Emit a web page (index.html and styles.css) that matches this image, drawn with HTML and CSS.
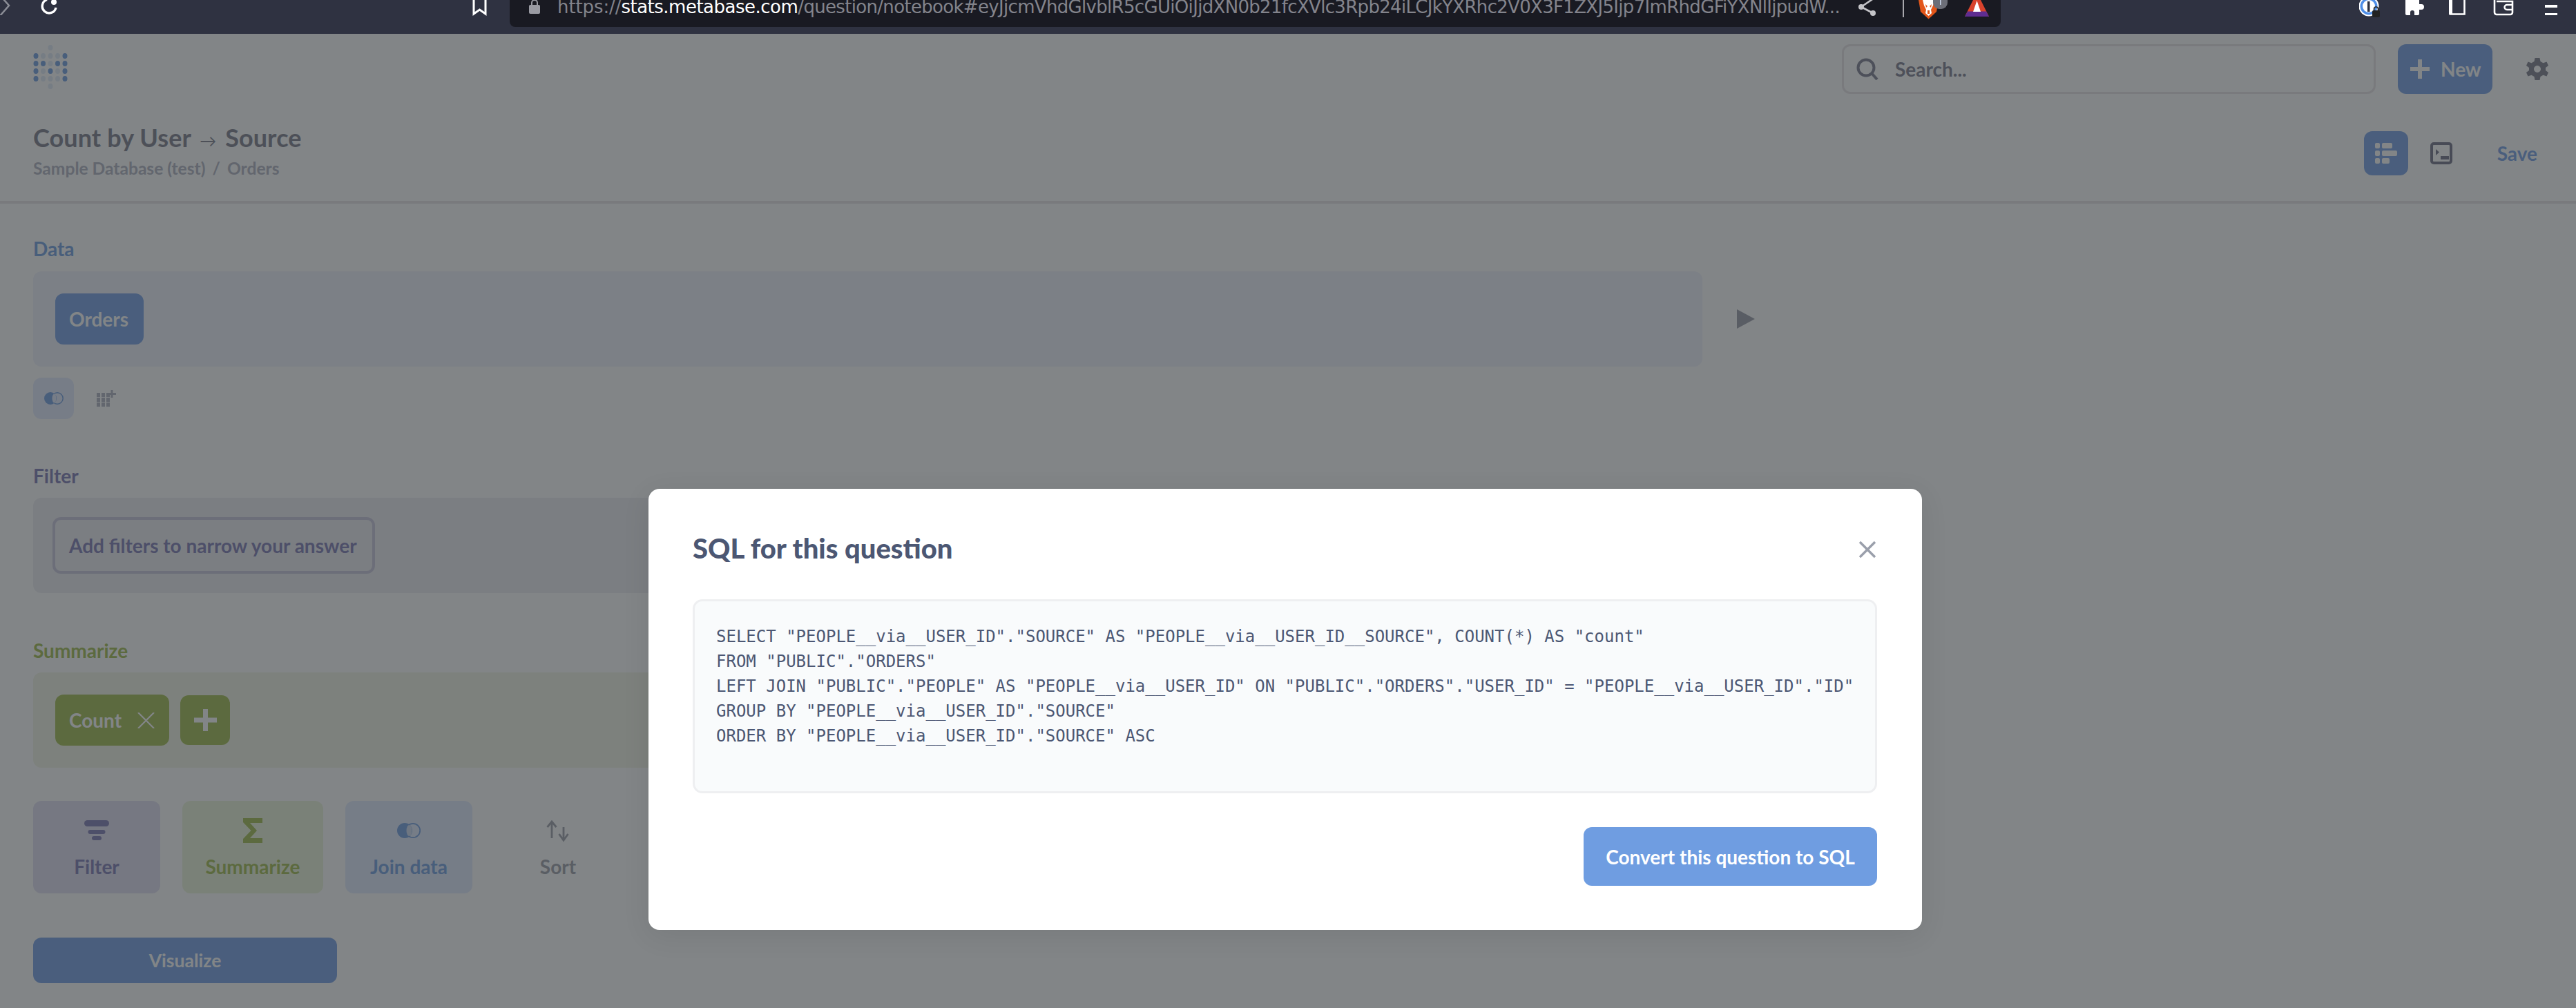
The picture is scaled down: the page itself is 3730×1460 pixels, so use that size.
FILE: index.html
```html
<!DOCTYPE html>
<html lang="en">
<head>
<meta charset="utf-8">
<title>Count by User → Source</title>
<link rel="stylesheet" href="styles.css">
</head>
<body>
<header class="browser">
  <svg class="i-chev" viewBox="0 0 16 22"><path d="M-1 -8 L13 8 L-1 24" fill="none" stroke="#8b8d96" stroke-width="2.5"/></svg>
  <svg class="i-reload" viewBox="0 0 27 24"><path d="M11 0.5 A10 10 0 1 0 24 12" fill="none" stroke="#fff" stroke-width="3.4"/><circle cx="21" cy="4" r="4" fill="#fff"/></svg>
  <svg class="i-bookmark" viewBox="0 0 21 24"><path d="M2 -4 V20 L10.5 14 L19 20 V-4" fill="none" stroke="#fff" stroke-width="3"/></svg>
  <div class="urlbar">
    <svg class="i-lock" viewBox="0 0 16 21"><rect x="0" y="7" width="16" height="13" rx="2" fill="#9a9ba3"/><path d="M4 8 V4 a4 4 0 0 1 8 0 V8" fill="none" stroke="#9a9ba3" stroke-width="2"/></svg>
    <div class="url"><span class="url-scheme">https://</span><b>stats.metabase.com</b><span>/question/notebook#eyJjcmVhdGlvblR5cGUiOiJjdXN0b21fcXVlc3Rpb24iLCJkYXRhc2V0X3F1ZXJ5Ijp7ImRhdGFiYXNlIjpudW...</span></div>
    <svg class="i-share" viewBox="0 0 26 24"><path d="M24 -3 L5 10 L22 19" fill="none" stroke="#c4c4c8" stroke-width="2.6"/><circle cx="5" cy="10" r="4" fill="#c4c4c8"/><circle cx="22" cy="19" r="4" fill="#c4c4c8"/></svg>
    <i class="sep"></i>
    <svg class="i-lion" viewBox="0 0 44 28"><path d="M0 0 H29 L26 17 L14.500 27.500 L3 17 Z" fill="#e2561a"/><path d="M6 0 H23 L21 8 L18 14 L19 19 L14.500 23 L10 19 L11 14 L8 8 Z" fill="#fff"/><path d="M10 6 L13 9 L11 11 Z M19 6 L16 9 L18 11 Z M13 15 H16 V20 H13 Z" fill="#e2561a"/><rect x="21" y="-10" width="21" height="23" rx="9" fill="#6c6e78"/><rect x="31" y="-2" width="1.500" height="9" fill="#c8d4e8"/></svg>
    <svg class="i-tri" viewBox="0 0 35 24"><path d="M12 0 H23 L35 24 H0 Z" fill="#d8432c"/><path d="M4 16.500 H31 L35 24 H0 Z" fill="#5e2d91"/><path d="M17.500 1 L23 17 H12 Z" fill="#fff"/></svg>
  </div>
  <svg class="i-onepass" viewBox="0 0 32 26"><circle cx="14" cy="9" r="14.500" fill="#fff"/><circle cx="14" cy="9" r="12.500" fill="#4f8fe8"/><circle cx="14" cy="9" r="9" fill="#fff"/><rect x="12" y="2" width="3.500" height="15" fill="#2f3241"/><rect x="19" y="15" width="11" height="10" rx="2" fill="#222"/><path d="M21.500 15 v-2 a3 3 0 0 1 6 0 v2" fill="none" stroke="#222" stroke-width="1.600"/></svg>
  <svg class="i-puzzle" viewBox="0 0 30 23"><path d="M3 -2 H23 V6 H26 a4 4 0 0 1 0 8 H23 V20 a2 2 0 0 1 -2 2 H16 V18 a3 3 0 0 0 -6 0 V22 H5 a2 2 0 0 1 -2 -2 Z" fill="#fff"/></svg>
  <svg class="i-side" viewBox="0 0 26 23"><path d="M3 -3 H23.500 V20.500 H3 Z" fill="none" stroke="#fff" stroke-width="2.600"/><rect x="1" y="-2" width="5" height="23" fill="#fff"/></svg>
  <svg class="i-wallet" viewBox="0 0 30 23"><path d="M2 -3 V18 a3 3 0 0 0 3 3 H25 a3 3 0 0 0 3 -3 V2 H5" fill="none" stroke="#fff" stroke-width="2.600"/><path d="M28 7 H20 a3 3 0 0 0 0 7 H28" fill="none" stroke="#fff" stroke-width="2.400"/></svg>
  <div class="burger"><i></i><i></i></div>
</header>

<div class="viewport">
  <nav class="appnav">
    <svg class="logo" viewBox="48 64 50 66">
      <g class="dot-pale"><ellipse cx="73" cy="69" rx="3.500" ry="4"/><ellipse cx="62.500" cy="81" rx="3.500" ry="4"/><ellipse cx="73" cy="81" rx="3.500" ry="4"/><ellipse cx="83.500" cy="81" rx="3.500" ry="4"/><ellipse cx="73" cy="92" rx="3.500" ry="4"/><ellipse cx="62.500" cy="103" rx="3.500" ry="4"/><ellipse cx="83.500" cy="103" rx="3.500" ry="4"/><ellipse cx="62.500" cy="114" rx="3.500" ry="4"/><ellipse cx="73" cy="114" rx="3.500" ry="4"/><ellipse cx="83.500" cy="114" rx="3.500" ry="4"/><ellipse cx="73" cy="125" rx="3.500" ry="4"/></g>
      <g class="dot-dark"><ellipse cx="52" cy="81" rx="3.500" ry="4"/><ellipse cx="94" cy="81" rx="3.500" ry="4"/><ellipse cx="52" cy="92" rx="3.500" ry="4"/><ellipse cx="62.500" cy="92" rx="3.500" ry="4"/><ellipse cx="83.500" cy="92" rx="3.500" ry="4"/><ellipse cx="94" cy="92" rx="3.500" ry="4"/><ellipse cx="52" cy="103" rx="3.500" ry="4"/><ellipse cx="73" cy="103" rx="3.500" ry="4"/><ellipse cx="94" cy="103" rx="3.500" ry="4"/><ellipse cx="52" cy="114" rx="3.500" ry="4"/><ellipse cx="94" cy="114" rx="3.500" ry="4"/></g>
    </svg>
    <div class="search">
      <svg class="i-search" viewBox="0 0 32 32"><circle cx="14" cy="14" r="11.500" fill="none" stroke="currentColor" stroke-width="4"/><path d="M22 22 L30 31" stroke="currentColor" stroke-width="4"/></svg>
      <span>Search...</span>
    </div>
    <button class="btn-new"><svg class="i-plus-sm" viewBox="0 0 28 28"><path d="M14 0 V28 M0 14 H28" stroke="#fff" stroke-width="6"/></svg>New</button>
    <svg class="i-gear" viewBox="0 0 32 32"><path fill-rule="evenodd" d="M12.500 0 H19.500 L20.500 5 L24.500 7.300 L29.500 5.500 L32 11 L28 14 V18 L32 21 L29.500 26.500 L24.500 24.700 L20.500 27 L19.500 32 H12.500 L11.500 27 L7.500 24.700 L2.500 26.500 L0 21 L4 18 V14 L0 11 L2.500 5.500 L7.500 7.300 L11.500 5 Z M16 11 a5 5 0 1 0 0.010 0 Z" fill="currentColor"/></svg>
  </nav>

  <section class="qheader">
    <div class="qtitle">
      <h1>Count by User <small>→</small> Source</h1>
      <p>Sample Database (test)<em>/</em>Orders</p>
    </div>
    <div class="qactions">
      <div class="toggle">
        <svg class="i-list" viewBox="0 0 32 32"><g fill="#fff"><rect x="0" y="1" width="7" height="8" rx="2"/><rect x="10" y="1" width="15" height="8" rx="2"/><rect x="0" y="12" width="7" height="8" rx="2"/><rect x="10" y="12" width="22" height="8" rx="2"/><rect x="0" y="23" width="7" height="8" rx="2"/><rect x="10" y="23" width="11" height="8" rx="2"/></g></svg>
      </div>
      <svg class="i-sql" viewBox="0 0 32 32"><rect x="2" y="2" width="28" height="28" rx="3" fill="none" stroke="currentColor" stroke-width="4"/><path d="M8 10 L13 14.500 L8 19 Z M15 20 H27 V25 H15 Z" fill="currentColor"/></svg>
      <span class="save">Save</span>
    </div>
  </section>

  <main class="notebook">
    <h3 class="label label-data">Data</h3>
    <div class="line">
      <div class="row row-data"><span class="pill pill-data">Orders</span></div>
      <svg class="i-play" viewBox="0 0 26 28"><path d="M0 0 L26 14 L0 28 Z" fill="currentColor"/></svg>
    </div>
    <div class="subactions">
      <div class="subtile"><svg class="i-join-sm" viewBox="0 0 28 18"><ellipse cx="19" cy="9" rx="8.200" ry="8.200" fill="none" stroke="#6f9de1" stroke-width="1.500"/><circle cx="9" cy="9" r="9" fill="#6f9de1"/><ellipse cx="14.500" cy="9" rx="3" ry="6.500" fill="#e4ebff"/></svg></div>
      <svg class="i-gridplus" viewBox="0 0 28 24"><g fill="#b0b2c0"><rect x="0" y="4" width="5" height="6"/><rect x="7" y="4" width="5" height="6"/><rect x="14" y="4" width="5" height="6"/><rect x="0" y="11" width="5" height="6"/><rect x="7" y="11" width="5" height="6"/><rect x="14" y="11" width="5" height="6"/><rect x="0" y="18" width="5" height="6"/><rect x="7" y="18" width="5" height="6"/><rect x="14" y="18" width="5" height="6"/></g><path d="M22 0 V11 M16 5.500 H28" stroke="#b0b2c0" stroke-width="3"/></svg>
    </div>

    <h3 class="label label-filter">Filter</h3>
    <div class="row row-filter"><span class="addfilter">Add filters to narrow your answer</span></div>

    <h3 class="label label-summ">Summarize</h3>
    <div class="row row-summ">
      <span class="pill pill-count">Count<svg class="i-x-sm" viewBox="0 0 25 23"><path d="M1 0 L24 23 M24 0 L1 23" stroke="#fff" stroke-width="2.200"/></svg></span>
      <span class="pill-plus"><svg class="i-plus-md" viewBox="0 0 33 32"><path d="M16.500 0 V32 M0 16 H33" stroke="#fff" stroke-width="7"/></svg></span>
    </div>

    <div class="tiles">
      <div class="tile tile-filter">
        <svg class="tile-icon" viewBox="0 0 36 36"><rect x="0" y="3" width="36" height="9" rx="4.500" fill="#7c78b3"/><rect x="5.500" y="17" width="25" height="6" rx="3" fill="#7c78b3"/><rect x="11" y="26" width="14" height="6" rx="3" fill="#7c78b3"/></svg>
        <span>Filter</span>
      </div>
      <div class="tile tile-summ">
        <svg class="tile-icon" viewBox="0 0 36 36"><path d="M4 0 H32 V7 H14 L24 18 L14 29 H32 V36 H4 V30 L15.500 18 L4 6 Z" fill="#a1bc4c"/></svg>
        <span>Summarize</span>
      </div>
      <div class="tile tile-join">
        <svg class="tile-icon" viewBox="0 0 36 36"><circle cx="24" cy="18" r="10.200" fill="none" stroke="#6f9de1" stroke-width="1.800"/><circle cx="12" cy="18" r="11" fill="#6f9de1"/><ellipse cx="18.500" cy="18" rx="4" ry="8" fill="#cfdcf2"/></svg>
        <span>Join data</span>
      </div>
      <div class="tile tile-sort">
        <svg class="tile-icon" viewBox="0 0 36 36"><path d="M9 29 V6 M2.500 13 L9 5 L15.500 13 M26 13 V31 M19.500 23 L26 32 L32.500 23" fill="none" stroke="currentColor" stroke-width="2.800"/></svg>
        <span>Sort</span>
      </div>
    </div>

    <button class="visualize">Visualize</button>
  </main>

  <div class="scrim">
    <div class="modal">
      <div class="modal-head">
        <h2>SQL for this question</h2>
        <svg class="i-close" viewBox="0 0 26 26"><path d="M2 2 L24 24 M24 2 L2 24" stroke="#9a9fab" stroke-width="3.400"/></svg>
      </div>
      <pre class="sql">SELECT "PEOPLE__via__USER_ID"."SOURCE" AS "PEOPLE__via__USER_ID__SOURCE", COUNT(*) AS "count"
FROM "PUBLIC"."ORDERS"
LEFT JOIN "PUBLIC"."PEOPLE" AS "PEOPLE__via__USER_ID" ON "PUBLIC"."ORDERS"."USER_ID" = "PEOPLE__via__USER_ID"."ID"
GROUP BY "PEOPLE__via__USER_ID"."SOURCE"
ORDER BY "PEOPLE__via__USER_ID"."SOURCE" ASC</pre>
      <div class="modal-foot"><button class="convert">Convert this question to SQL</button></div>
    </div>
  </div>
</div>
</body>
</html>
```

FILE: styles.css
```css
* { box-sizing: border-box; }
html, body { margin: 0; padding: 0; height: 100%; overflow: hidden; }
body { width: 3730px; height: 1460px; background: #fff; font-family: Lato, "Open Sans", sans-serif; color: #4c5773; display: flex; flex-direction: column; }
svg { display: block; flex: none; }
h1, h2, h3, p { margin: 0; }
button { font-family: inherit; border: 0; padding: 0; }

/* browser chrome */
.browser { height: 49px; flex: none; background: #2f3241; display: flex; align-items: flex-start; overflow: hidden; padding-right: 27px; }
.i-chev { width: 16px; height: 22px; }
.i-reload { width: 27px; height: 24px; margin-left: 41px; margin-top: -1px; }
.i-bookmark { width: 21px; height: 24px; margin-left: 600px; }
.urlbar { width: 2159px; height: 39px; margin-left: 33px; background: #191a22; border-radius: 0 0 8px 8px; display: flex; align-items: flex-start; padding-left: 28px; }
.i-lock { width: 16px; height: 21px; }
.url { width: 1870px; margin-left: 25px; margin-top: -8px; font: 26px/36px "DejaVu Sans", sans-serif; letter-spacing: -0.68px; color: #83848c; white-space: nowrap; overflow: hidden; }
.url-scheme { letter-spacing: -0.1px; }
.url b { font-weight: 400; color: #fff; letter-spacing: -0.5px; }
.i-share { width: 26px; height: 24px; margin-left: 13px; }
.sep { width: 2px; height: 25px; background: #a8a8ad; margin-left: 39px; }
.i-lion { width: 44px; height: 28px; margin-left: 21px; }
.i-tri { width: 35px; height: 24px; margin-left: 23px; }
.i-onepass { width: 32px; height: 26px; margin-left: auto; }
.i-puzzle { width: 30px; height: 23px; margin-left: 32px; }
.i-side { width: 26px; height: 23px; margin-left: 35px; }
.i-wallet { width: 30px; height: 23px; margin-left: 39px; }
.burger { width: 18px; margin-left: 45px; padding-top: 7px; display: flex; flex-direction: column; gap: 8px; }
.burger i { display: block; height: 3.5px; background: #fff; }

/* app */
.viewport { position: relative; flex: 1; min-height: 0; overflow: hidden; }
.appnav { display: flex; align-items: flex-start; padding: 15px 40px 0 48px; }
.logo { width: 50px; height: 66px; margin-right: auto; }
.dot-pale { fill: #6f9de1; opacity: .2; }
.dot-dark { fill: #6f9de1; }
.search { width: 773px; height: 72px; border: 3px solid #e9e4e7; border-radius: 12px; display: flex; align-items: center; padding-left: 18px; color: #7a7c8e; font-size: 28px; font-weight: 700; }
.search span { margin-left: 24px; }
.i-search { width: 32px; height: 32px; }
.btn-new { width: 137px; height: 72px; margin-left: 32px; border-radius: 12px; background: #739fe6; color: #fff; font-size: 28px; font-weight: 700; display: flex; align-items: center; gap: 16px; padding-left: 18px; }
.i-plus-sm { width: 28px; height: 28px; }
.i-gear { width: 32px; height: 32px; margin-left: 49px; margin-top: 20px; color: #7b7c8a; }

.qheader { height: 159px; border-bottom: 4px solid #e9e4e7; display: flex; justify-content: space-between; align-items: flex-start; padding: 0 56px 0 48px; }
.qtitle { padding-top: 41px; }
.qtitle h1 { font-size: 36px; line-height: 44px; font-weight: 700; color: #7a7c8b; letter-spacing: .1px; }
.qtitle h1 small { font-size: 24px; font-weight: 400; margin: 0 4px; }
.qtitle p { margin-top: 3px; font-size: 24.6px; line-height: 30px; font-weight: 700; color: #b0b1c1; }
.qtitle p em { font-style: normal; margin: 0 10px; }
.qactions { display: flex; align-items: center; margin-top: 54px; }
.toggle { width: 64px; height: 64px; border-radius: 12px; background: #739fe6; display: flex; align-items: center; justify-content: center; }
.i-list { width: 32px; height: 32px; }
.i-sql { width: 32px; height: 32px; margin-left: 32px; color: #6e6f85; }
.save { margin-left: 65px; font-size: 28px; font-weight: 700; color: #739fe6; }

.notebook { padding: 48px 0 0 48px; }
.label { font-size: 28px; line-height: 34px; font-weight: 700; }
.label-data { color: #6f9de1; margin-bottom: 16px; }
.label-filter { color: #7c78b3; margin-top: 65px; margin-bottom: 15px; }
.label-summ { color: #a1bc4c; margin-top: 66px; margin-bottom: 15px; }
.line { display: flex; align-items: center; }
.row { width: 2417px; height: 138px; border-radius: 12px; display: flex; align-items: center; padding-left: 32px; }
.row-data { background: #eff2fd; }
.row-filter { background: #eeeef2; padding-left: 28px; }
.row-summ { background: #f3f6e6; gap: 16px; }
.i-play { width: 26px; height: 28px; margin-left: 50px; color: #9a9ca8; }
.pill { height: 74px; border-radius: 12px; color: #fff; font-size: 28px; font-weight: 700; display: flex; align-items: center; padding: 0 20px; }
.pill-data { width: 128px; background: #739fe6; }
.pill-count { width: 165px; background: #a1bc4c; gap: 23px; }
.i-x-sm { width: 25px; height: 23px; }
.pill-plus { width: 72px; height: 72px; border-radius: 12px; background: #a1bc4c; display: flex; align-items: center; justify-content: center; }
.i-plus-md { width: 33px; height: 32px; }
.addfilter { width: 467px; height: 82px; border: 4px solid #c9c6dd; border-radius: 12px; color: #7c78b3; font-size: 28px; font-weight: 700; display: flex; align-items: center; padding-left: 20px; white-space: nowrap; }
.subactions { display: flex; align-items: center; margin-top: 16px; height: 60px; }
.subtile { width: 59px; height: 60px; border-radius: 12px; background: #e4ebff; display: flex; align-items: center; justify-content: center; }
.i-join-sm { width: 28px; height: 18px; }
.i-gridplus { width: 28px; height: 24px; margin-left: 33px; }

.tiles { display: flex; gap: 32px; margin-top: 48px; }
.tile { width: 184px; height: 134px; border-radius: 12px; display: flex; flex-direction: column; align-items: center; padding-top: 25px; font-size: 28px; font-weight: 700; }
.tile span { margin-top: 17px; line-height: 34px; }
.tile-icon { width: 36px; height: 36px; }
.tile-filter { background: #e2dff2; color: #7c78b3; }
.tile-summ { width: 204px; background: #ecf6d9; color: #a1bc4c; }
.tile-join { background: #e2ebff; color: #6f9de1; }
.tile-sort { color: #9c9ea9; }
.visualize { display: block; width: 440px; height: 66px; margin-top: 64px; border-radius: 12px; background: #739fe6; color: #fff; font-size: 26.5px; font-weight: 700; }

/* modal */
.scrim { position: absolute; inset: 0; background: rgba(46, 52, 55, .6); display: flex; align-items: flex-start; padding: 659px 0 0 939px; }
.modal { width: 1844px; height: 639px; background: #fff; border-radius: 16px; padding: 61px 65px 0 64px; box-shadow: 0 8px 40px rgba(0, 0, 0, .08); }
.modal-head { display: flex; justify-content: space-between; align-items: center; height: 50px; }
.modal-head h2 { font-size: 40px; line-height: 50px; font-weight: 900; color: #4c5773; }
.i-close { width: 26px; height: 26px; margin-right: 1px; margin-top: 4px; }
.sql { margin: 49px 0 0; height: 281px; border: 3px solid #eeeff1; border-radius: 14px; background: #f9fbfc; padding: 33px 31px 0; font: 24px/36px "DejaVu Sans Mono", monospace; color: #4c5773; white-space: pre; overflow: hidden; }
.modal-foot { display: flex; justify-content: flex-end; margin-top: 49px; }
.convert { width: 425px; height: 85px; border-radius: 12px; background: #6f9de1; color: #fff; font-size: 28px; font-weight: 700; }
```
